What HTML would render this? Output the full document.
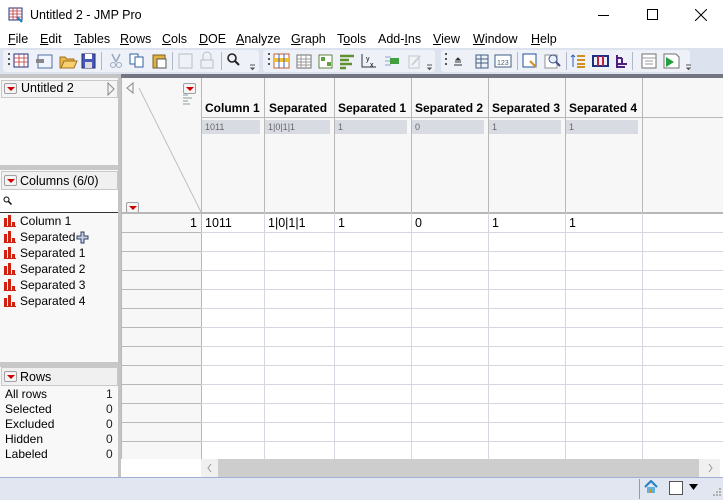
<!DOCTYPE html>
<html><head><meta charset="utf-8"><style>
*{margin:0;padding:0;box-sizing:border-box}
body{width:723px;height:500px;overflow:hidden;background:#fff;font-family:"Liberation Sans",sans-serif;font-size:12px;color:#000;position:relative}
.a{position:absolute}
.menu span{position:absolute;top:32px;font-size:12.5px}
.tb{position:absolute;top:48px;height:26px;left:0;width:723px;background:#dde3ee}
.grp{position:absolute;top:2px;height:22px;background:#eef1f8;border-radius:3px}
.dd{width:13px;height:11px;border:1px solid #a0a0a0;background:#f4f4f4;border-radius:2px}
.dd:after{content:"";position:absolute;left:2px;top:3px;border-left:4px solid transparent;border-right:4px solid transparent;border-top:4px solid #d00000}
.colh{position:absolute;top:101px;font-weight:bold;font-size:12px}
.sum{position:absolute;top:120px;height:14px;background:#d8dce2;font-size:9px;color:#666;padding-left:3px;line-height:14px}
.vl{position:absolute;width:1px;background:#b8b8b8}
.li{position:absolute;left:20px;font-size:12px}
.rw{position:absolute;left:5px;font-size:12px}
.rv{position:absolute;left:106px;font-size:12px;color:#222}
.cell{position:absolute;top:216px;font-size:12.5px}
</style></head><body>
<svg class="a" style="left:8px;top:7px" width="16" height="16"><rect x="1" y="1" width="13" height="12" fill="#fff" stroke="#203080"/><path d="M1 4H14M1 7H14M1 10H14M5 1V13M9 1V13" stroke="#c03030" stroke-width=".8"/><path d="M9 10l5 5" stroke="#2080c0" stroke-width="2"/></svg>
<div class="a" style="left:30px;top:8px;font-size:12.5px">Untitled 2 - JMP Pro</div>
<div class="a" style="left:598px;top:15px;width:11px;height:1px;background:#000"></div>
<div class="a" style="left:647px;top:9px;width:11px;height:11px;border:1px solid #000"></div>
<svg class="a" style="left:695px;top:9px" width="12" height="12"><path d="M0 0L12 12M12 0L0 12" stroke="#000"/></svg>
<div class="menu">
<span style="left:8px"><u>F</u>ile</span><span style="left:40px"><u>E</u>dit</span><span style="left:74px"><u>T</u>ables</span><span style="left:120px"><u>R</u>ows</span><span style="left:162px"><u>C</u>ols</span><span style="left:199px"><u>D</u>OE</span><span style="left:236px"><u>A</u>nalyze</span><span style="left:291px"><u>G</u>raph</span><span style="left:337px">T<u>o</u>ols</span><span style="left:378px">Add-<u>I</u>ns</span><span style="left:433px"><u>V</u>iew</span><span style="left:473px"><u>W</u>indow</span><span style="left:531px"><u>H</u>elp</span>
</div>
<div class="tb">
<div class="grp" style="left:3px;width:256px"></div>
<div class="grp" style="left:263px;width:172px"></div>
<div class="grp" style="left:441px;width:249px"></div>
<svg class="a" style="left:0;top:0" width="723" height="26">
<g fill="#555"><rect x="8" y="5" width="2" height="2"/><rect x="8" y="10" width="2" height="2"/><rect x="8" y="15" width="2" height="2"/><rect x="268" y="5" width="2" height="2"/><rect x="268" y="10" width="2" height="2"/><rect x="268" y="15" width="2" height="2"/><rect x="445" y="5" width="2" height="2"/><rect x="445" y="10" width="2" height="2"/><rect x="445" y="15" width="2" height="2"/></g>
<rect x="14" y="6" width="14" height="13" fill="#fff" stroke="#203080"/><path d="M14 10H28M14 14H28M19 6V19M24 6V19" stroke="#c03030" stroke-width=".8"/>
<rect x="38" y="7" width="14" height="13" fill="#f0f4ff" stroke="#5070a0"/><rect x="36" y="11" width="8" height="4" fill="#888"/>
<path d="M60 9h5l2 2h7v9H60z" fill="#e8b848" stroke="#a07020"/><path d="M61 20l3-7h13l-3 7z" fill="#f8d070" stroke="#a07020"/>
<rect x="82" y="6" width="13" height="14" fill="#4858b8" stroke="#203070"/><rect x="85" y="6" width="7" height="5" fill="#fff"/><rect x="85" y="14" width="7" height="6" fill="#ddd"/>
<rect x="101" y="4" width="1" height="18" fill="#b0b8c8"/>
<path d="M112 6l4 8M120 6l-4 8" stroke="#9aa8c0" stroke-width="1.5"/><circle cx="113" cy="17" r="2.5" fill="none" stroke="#9aa8c0"/><circle cx="119" cy="17" r="2.5" fill="none" stroke="#9aa8c0"/>
<rect x="130" y="6" width="8" height="10" fill="#fff" stroke="#3060a0"/><rect x="135" y="9" width="8" height="10" fill="#fff" stroke="#3060a0"/>
<rect x="153" y="7" width="12" height="13" fill="#e0b040" stroke="#806020"/><rect x="157" y="11" width="9" height="9" fill="#fff" stroke="#555"/>
<rect x="172" y="4" width="1" height="18" fill="#b0b8c8"/>
<rect x="179" y="6" width="13" height="14" fill="none" stroke="#b8c0c8"/><rect x="201" y="12" width="12" height="8" fill="none" stroke="#b8c0c8"/><path d="M203 12V8a4 4 0 018 0v4" fill="none" stroke="#b8c0c8"/>
<rect x="221" y="4" width="1" height="18" fill="#b0b8c8"/>
<circle cx="232" cy="10" r="4" fill="none" stroke="#222" stroke-width="1.6"/><path d="M235 13l4 4" stroke="#222" stroke-width="2"/>
<path d="M250 17h5M251 20h3l-1.5 1.5z" stroke="#555" fill="#555"/>
<rect x="274" y="6" width="15" height="14" fill="#fff" stroke="#c06030"/><rect x="274" y="10" width="15" height="4" fill="#f0c030"/><path d="M279 6V20M284 6V20" stroke="#4060c0"/>
<rect x="297" y="7" width="14" height="13" fill="#fff" stroke="#707070"/><path d="M297 11h14M297 14h14M297 17h14M301 7v13M306 7v13" stroke="#999"/>
<rect x="319" y="7" width="13" height="13" fill="#fff" stroke="#608040"/><rect x="321" y="9" width="4" height="4" fill="#60a040"/><rect x="327" y="14" width="4" height="4" fill="#60a040"/>
<path d="M340 8h14M340 12h9M340 16h12M340 20h6" stroke="#609030" stroke-width="2.5"/>
<path d="M362 6v13h14" stroke="#333" fill="none"/><text x="366" y="13" font-size="7" fill="#000">y</text><text x="370" y="19" font-size="7">x</text>
<path d="M385 9h6M385 13h6M385 17h6" stroke="#90a8c8"/><rect x="390" y="10" width="9" height="6" fill="#40a040"/>
<path d="M409 8h10v12h-10z" fill="#f4f4f4" stroke="#c0c8d0"/><path d="M412 17l8-9" stroke="#c8d0d8" stroke-width="2"/>
<path d="M427 17h5M428 20h3l-1.5 1.5z" stroke="#555" fill="#555"/>
<path d="M454 17h8M455 14h6M458 10l-2 2h4z" stroke="#333" fill="#333"/>
<rect x="476" y="7" width="12" height="13" fill="none" stroke="#406080"/><path d="M476 11h12M476 15h12M481 7v13" stroke="#406080"/>
<rect x="495" y="7" width="16" height="12" fill="#fff" stroke="#406080"/><text x="497" y="17" font-size="7" fill="#406080">123</text>
<rect x="517" y="4" width="1" height="18" fill="#b0b8c8"/>
<rect x="523" y="6" width="13" height="13" fill="#fff" stroke="#2050a0"/><path d="M530 13l6 6" stroke="#d09020" stroke-width="2"/>
<rect x="545" y="7" width="12" height="13" fill="#fff" stroke="#909090"/><circle cx="553" cy="11" r="4" fill="#e8f0ff" stroke="#405080"/><path d="M556 14l4 4" stroke="#405080" stroke-width="2"/>
<rect x="566" y="4" width="1" height="18" fill="#b0b8c8"/>
<path d="M573 7v12M571 9l2-2 2 2" stroke="#3060c0" fill="none"/><path d="M577 8h8M577 12h8M577 16h8M577 19h8" stroke="#d09020" stroke-width="2"/>
<rect x="593" y="8" width="15" height="10" fill="none" stroke="#203080" stroke-width="2"/><path d="M598 8v10M603 8v10" stroke="#c02040" stroke-width="2"/>
<path d="M617 7v12h8M617 10h5M622 10v6h5M617 16h5" stroke="#502080" stroke-width="2" fill="none"/>
<rect x="632" y="4" width="1" height="18" fill="#b0b8c8"/>
<rect x="642" y="6" width="14" height="14" fill="#fff" stroke="#707070"/><path d="M642 10h14M645 13h8M645 16h8" stroke="#999"/>
<path d="M664 6h12l3 3v11h-15z" fill="#fff" stroke="#707070"/><path d="M666 9v10l8-5z" fill="#20a040"/>
<path d="M686 17h5M687 20h3l-1.5 1.5z" stroke="#555" fill="#555"/>
</svg>
</div>
<div class="a" style="left:0;top:74px;width:121px;height:4px;background:#c4c4c4"></div>
<div class="a" style="left:121px;top:74px;width:602px;height:4px;background:#737680"></div>
<div class="a" style="left:0;top:78px;width:118px;height:400px;background:#f8f8f8"></div>
<div class="a" style="left:118px;top:78px;width:3px;height:400px;background:#c4c4c4"></div>
<div class="a" style="left:1px;top:80px;width:117px;height:18px;border:1px solid #c8c8c8;background:#f4f4f4"></div>
<div class="a dd" style="left:4px;top:83px"></div>
<div class="a" style="left:21px;top:81px;font-size:12.5px">Untitled 2</div>
<svg class="a" style="left:107px;top:82px" width="8" height="14"><path d="M1 1l6 6-6 6z" fill="none" stroke="#888"/></svg>
<div class="a" style="left:0;top:165px;width:118px;height:5px;background:#c8c8c8"></div>
<div class="a" style="left:1px;top:171px;width:117px;height:19px;border:1px solid #c8c8c8;background:#f0f0f0"></div>
<div class="a dd" style="left:4px;top:175px"></div>
<div class="a" style="left:20px;top:174px;font-size:12.5px">Columns (6/0)</div>
<div class="a" style="left:0;top:190px;width:118px;height:22px;background:#fff"></div>
<svg class="a" style="left:3px;top:196px" width="9" height="9"><circle cx="3.5" cy="3.5" r="2.5" fill="none" stroke="#000"/><path d="M5.5 5.5l3 3" stroke="#000" stroke-width="1.4"/></svg>
<div class="a" style="left:0;top:212px;width:118px;height:1px;background:#333"></div>
<svg class="a" style="left:0;top:214px" width="20" height="100"><g fill="#d02010"><g id="b"><rect x="4" y="4" width="3" height="9"/><rect x="8" y="1" width="3" height="12"/><rect x="12" y="8" width="3" height="5"/><rect x="4" y="12" width="12" height="1"/></g><use href="#b" y="16"/><use href="#b" y="32"/><use href="#b" y="48"/><use href="#b" y="64"/><use href="#b" y="80"/></g></svg>
<div class="li" style="top:214px">Column 1</div>
<div class="li" style="top:230px">Separated</div>
<svg class="a" style="left:76px;top:231px" width="13" height="13"><path d="M5 1h3v4h4v3H8v4H5V8H1V5h4z" fill="#c8d0e8" stroke="#304060"/></svg>
<div class="li" style="top:246px">Separated 1</div>
<div class="li" style="top:262px">Separated 2</div>
<div class="li" style="top:278px">Separated 3</div>
<div class="li" style="top:294px">Separated 4</div>
<div class="a" style="left:0;top:362px;width:118px;height:5px;background:#c8c8c8"></div>
<div class="a" style="left:1px;top:367px;width:117px;height:19px;border:1px solid #c8c8c8;background:#f0f0f0"></div>
<div class="a dd" style="left:4px;top:371px"></div>
<div class="a" style="left:20px;top:370px;font-size:12.5px">Rows</div>
<div class="rw" style="top:387px">All rows</div><div class="rv" style="top:387px">1</div>
<div class="rw" style="top:402px">Selected</div><div class="rv" style="top:402px">0</div>
<div class="rw" style="top:417px">Excluded</div><div class="rv" style="top:417px">0</div>
<div class="rw" style="top:432px">Hidden</div><div class="rv" style="top:432px">0</div>
<div class="rw" style="top:447px">Labeled</div><div class="rv" style="top:447px">0</div>
<div class="a" style="left:121px;top:78px;width:602px;height:135px;background:#f7f7f7"></div>
<div class="a" style="left:121px;top:213px;width:80px;height:246px;background:#f7f7f7"></div>
<svg class="a" style="left:121px;top:78px" width="82" height="136"><path d="M18 10L80 134" stroke="#c0c0c0"/><path d="M12 5l-6 5 6 5z" fill="none" stroke="#888"/><path d="M62 17h5M62 20h9M62 23h5M62 26h7" stroke="#8aa0a0"/></svg>
<div class="a dd" style="left:183px;top:83px"></div>
<div class="a dd" style="left:126px;top:202px"></div>
<div class="colh" style="left:205px">Column 1</div>
<div class="colh" style="left:269px">Separated</div>
<div class="colh" style="left:338px">Separated 1</div>
<div class="colh" style="left:415px">Separated 2</div>
<div class="colh" style="left:492px">Separated 3</div>
<div class="colh" style="left:569px">Separated 4</div>
<div class="sum" style="left:202px;width:58px">1011</div>
<div class="sum" style="left:265px;width:65px">1|0|1|1</div>
<div class="sum" style="left:335px;width:72px">1</div>
<div class="sum" style="left:412px;width:72px">0</div>
<div class="sum" style="left:489px;width:72px">1</div>
<div class="sum" style="left:566px;width:72px">1</div>
<div class="a" style="left:201px;top:117px;width:522px;height:1px;background:#b8b8b8"></div>
<div class="vl" style="left:201px;top:78px;height:381px"></div>
<div class="vl" style="left:264px;top:78px;height:135px"></div>
<div class="vl" style="left:334px;top:78px;height:135px"></div>
<div class="vl" style="left:411px;top:78px;height:135px"></div>
<div class="vl" style="left:488px;top:78px;height:135px"></div>
<div class="vl" style="left:565px;top:78px;height:135px"></div>
<div class="vl" style="left:642px;top:78px;height:135px"></div>
<div class="vl" style="left:121px;top:78px;height:381px"></div>
<div class="a" style="left:121px;top:212px;width:602px;height:2px;background:#b8b8b8"></div>
<div class="vl" style="left:264px;top:213px;height:246px;background:#d6d6e0"></div>
<div class="vl" style="left:334px;top:213px;height:246px;background:#d6d6e0"></div>
<div class="vl" style="left:411px;top:213px;height:246px;background:#d6d6e0"></div>
<div class="vl" style="left:488px;top:213px;height:246px;background:#d6d6e0"></div>
<div class="vl" style="left:565px;top:213px;height:246px;background:#d6d6e0"></div>
<div class="vl" style="left:642px;top:213px;height:246px;background:#d6d6e0"></div>
<div class="a" style="left:121px;top:232px;width:602px;height:228px;background:repeating-linear-gradient(to bottom,#d6d6e0 0,#d6d6e0 1px,transparent 1px,transparent 19px)"></div>
<div class="a" style="left:121px;top:232px;width:80px;height:228px;background:repeating-linear-gradient(to bottom,#b8b8b8 0,#b8b8b8 1px,transparent 1px,transparent 19px)"></div>
<div class="cell" style="left:190px">1</div>
<div class="cell" style="left:205px">1011</div>
<div class="cell" style="left:268px">1|0|1|1</div>
<div class="cell" style="left:338px">1</div>
<div class="cell" style="left:415px">0</div>
<div class="cell" style="left:492px">1</div>
<div class="cell" style="left:569px">1</div>
<div class="a" style="left:201px;top:459px;width:519px;height:18px;background:#cdcdcd"></div>
<div class="a" style="left:201px;top:459px;width:17px;height:18px;background:#f0f0f0"></div>
<div class="a" style="left:699px;top:459px;width:21px;height:18px;background:#f0f0f0"></div>
<svg class="a" style="left:205px;top:463px" width="10" height="10"><path d="M6 1L3 5l3 4" fill="none" stroke="#999"/></svg>
<svg class="a" style="left:706px;top:463px" width="10" height="10"><path d="M3 1l3 4-3 4" fill="none" stroke="#999"/></svg>
<div class="a" style="left:0;top:459px;width:121px;height:18px;background:#f8f8f8"></div>
<div class="a" style="left:118px;top:459px;width:3px;height:18px;background:#c4c4c4"></div>
<div class="a" style="left:0;top:477px;width:723px;height:23px;background:#e1e6f0;border-top:1px solid #a4acd8"></div>
<div class="a" style="left:639px;top:479px;width:1px;height:20px;background:#999"></div>
<svg class="a" style="left:644px;top:480px" width="14" height="14"><path d="M1 7L7 1l6 6" fill="none" stroke="#2080c0" stroke-width="2"/><rect x="3" y="7" width="8" height="6" fill="#60b0e0"/><rect x="6" y="9" width="2" height="4" fill="#d09020"/></svg>
<div class="a" style="left:669px;top:481px;width:14px;height:14px;border:1px solid #555;background:#fff"></div>
<svg class="a" style="left:689px;top:484px" width="10" height="8"><path d="M0 0h9L4.5 6z" fill="#000"/></svg>
<svg class="a" style="left:710px;top:487px" width="12" height="12"><g fill="#b0b0b0"><rect x="9" y="1" width="2" height="2"/><rect x="6" y="4" width="2" height="2"/><rect x="9" y="4" width="2" height="2"/><rect x="3" y="7" width="2" height="2"/><rect x="6" y="7" width="2" height="2"/><rect x="9" y="7" width="2" height="2"/></g></svg>
</body></html>
